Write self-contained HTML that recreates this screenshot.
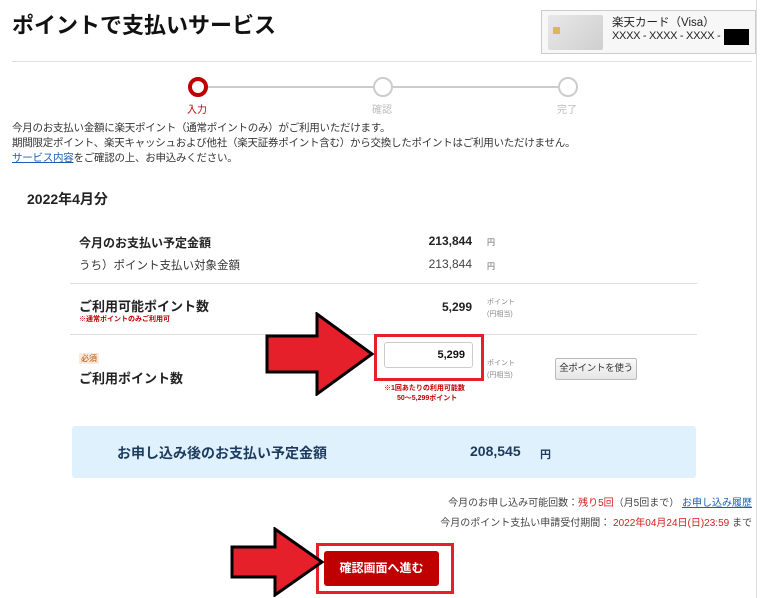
<!DOCTYPE html>
<html><head><meta charset="utf-8"><style>
*{margin:0;padding:0;box-sizing:border-box}
body{width:768px;height:598px;background:#fff;font-family:"Liberation Sans","Noto Sans CJK JP",sans-serif;color:#333;position:relative;overflow:hidden}
.a{position:absolute;white-space:nowrap}
</style></head><body>
<div class="a" style="left:756px;top:0;width:1px;height:598px;background:#ddd"></div>
<div class="a" style="left:12px;top:8px;font-size:22px;font-weight:bold;color:#111">ポイントで支払いサービス</div>
<div class="a" style="left:541px;top:10px;width:215px;height:44px;border:1px solid #ccc;background:#f7f7f7"></div>
<div class="a" style="left:548px;top:15px;width:55px;height:35px;background:linear-gradient(135deg,#e8e8e8,#cfcfcf);border-radius:2px"></div>
<div class="a" style="left:553px;top:27px;width:7px;height:7px;background:#d8b85a"></div>
<div class="a" style="left:612px;top:14px;font-size:11.5px;color:#222">楽天カード（Visa）</div>
<div class="a" style="left:612px;top:30px;font-size:11px;color:#222;letter-spacing:-0.3px">XXXX - XXXX - XXXX -</div>
<div class="a" style="left:724px;top:29px;width:25px;height:16px;background:#000"></div>
<div class="a" style="left:12px;top:61px;width:740px;height:1px;background:#ddd"></div>
<div class="a" style="left:198px;top:86px;width:370px;height:2px;background:#ccc"></div>
<div class="a" style="left:188px;top:77px;width:20px;height:20px;border:4px solid #bf0000;border-radius:50%;background:#fff"></div>
<div class="a" style="left:373px;top:77px;width:20px;height:20px;border:2px solid #ccc;border-radius:50%;background:#fff"></div>
<div class="a" style="left:558px;top:77px;width:20px;height:20px;border:2px solid #ccc;border-radius:50%;background:#fff"></div>
<div class="a" style="left:187px;top:101px;font-size:10px;color:#bf0000">入力</div>
<div class="a" style="left:372px;top:101px;font-size:10px;color:#bbb">確認</div>
<div class="a" style="left:557px;top:101px;font-size:10px;color:#bbb">完了</div>
<div class="a" style="left:12px;top:121px;font-size:10.5px;line-height:15px;color:#333;letter-spacing:-0.25px">今月のお支払い金額に楽天ポイント（通常ポイントのみ）がご利用いただけます。<br>期間限定ポイント、楽天キャッシュおよび他社（楽天証券ポイント含む）から交換したポイントはご利用いただけません。<br><span style="color:#1a5fb4;text-decoration:underline">サービス内容</span>をご確認の上、お申込みください。</div>
<div class="a" style="left:27px;top:189px;font-size:14px;font-weight:bold;color:#222">2022年4月分</div>
<div class="a" style="left:79px;top:234px;font-size:12px;font-weight:bold;color:#222">今月のお支払い予定金額</div>
<div class="a" style="left:420px;top:234px;width:52px;text-align:right;font-size:12px;font-weight:bold;color:#222">213,844</div>
<div class="a" style="left:487px;top:237px;font-size:8px;color:#666">円</div>
<div class="a" style="left:79px;top:257px;font-size:11.5px;color:#333">うち）ポイント支払い対象金額</div>
<div class="a" style="left:420px;top:257px;width:52px;text-align:right;font-size:12px;color:#444">213,844</div>
<div class="a" style="left:487px;top:261px;font-size:8px;color:#666">円</div>
<div class="a" style="left:70px;top:283px;width:627px;height:1px;background:#ddd"></div>
<div class="a" style="left:79px;top:296px;font-size:13px;font-weight:bold;color:#222">ご利用可能ポイント数</div>
<div class="a" style="left:79px;top:314px;font-size:7px;font-weight:bold;color:#bf0000">※通常ポイントのみご利用可</div>
<div class="a" style="left:420px;top:300px;width:52px;text-align:right;font-size:12px;font-weight:bold;color:#222">5,299</div>
<div class="a" style="left:487px;top:297px;font-size:7px;line-height:12px;color:#888">ポイント<br>(円相当)</div>
<div class="a" style="left:70px;top:334px;width:627px;height:1px;background:#ddd"></div>
<div class="a" style="left:79px;top:353px;font-size:8px;color:#b05000;background:#fde9d9;padding:0 2px">必須</div>
<div class="a" style="left:79px;top:368px;font-size:13px;font-weight:bold;color:#222">ご利用ポイント数</div>
<div class="a" style="left:374px;top:334px;width:110px;height:47px;border:3px solid #e5202a"></div>
<div class="a" style="left:384px;top:342px;width:89px;height:26px;border:1px solid #ccc;border-radius:3px;background:#fff;font-size:11px;font-weight:bold;text-align:right;padding:6px 7px 0 0;color:#111">5,299</div>
<div class="a" style="left:384px;top:383px;font-size:7px;font-weight:bold;color:#bf0000">※1回あたりの利用可能数</div>
<div class="a" style="left:397px;top:393px;font-size:7px;font-weight:bold;color:#bf0000">50～5,299ポイント</div>
<div class="a" style="left:487px;top:358px;font-size:7px;line-height:12px;color:#888">ポイント<br>(円相当)</div>
<div class="a" style="left:555px;top:358px;width:82px;height:22px;border:1px solid #bbb;border-radius:2px;background:linear-gradient(#fafafa,#e6e6e6);font-size:9.5px;color:#333;text-align:center;line-height:20px;letter-spacing:-0.3px">全ポイントを使う</div>
<svg class="a" style="left:265px;top:312px" width="112" height="84"><polygon points="2,24 52,24 52,2 107,42 52,82 52,60 2,60" fill="#e5202a" stroke="#000" stroke-width="3"/></svg>
<div class="a" style="left:72px;top:426px;width:624px;height:52px;background:#dff1fd;border-radius:3px"></div>
<div class="a" style="left:117px;top:443px;font-size:14px;font-weight:bold;color:#1d3b5e">お申し込み後のお支払い予定金額</div>
<div class="a" style="left:470px;top:443px;font-size:14px;font-weight:bold;color:#1d3b5e">208,545</div>
<div class="a" style="left:540px;top:446px;font-size:11px;font-weight:bold;color:#1d3b5e">円</div>
<div class="a" style="right:16px;top:494px;font-size:10px;color:#444">今月のお申し込み可能回数：<span style="color:#d02020">残り5回</span>（月5回まで） <span style="color:#1a5fb4;text-decoration:underline">お申し込み履歴</span></div>
<div class="a" style="right:16px;top:514px;font-size:10px;color:#444">今月のポイント支払い申請受付期間： <span style="color:#d02020">2022年04月24日(日)23:59</span> まで</div>
<div class="a" style="left:316px;top:543px;width:138px;height:51px;border:3px solid #e5202a"></div>
<div class="a" style="left:324px;top:551px;width:115px;height:35px;background:#bf0000;border-radius:3px;color:#fff;font-size:12px;font-weight:bold;text-align:center;line-height:35px">確認画面へ進む</div>
<svg class="a" style="left:230px;top:527px" width="96" height="70"><polygon points="2,20 45,20 45,2 92,35 45,68 45,50 2,50" fill="#e5202a" stroke="#000" stroke-width="3"/></svg>
</body></html>
